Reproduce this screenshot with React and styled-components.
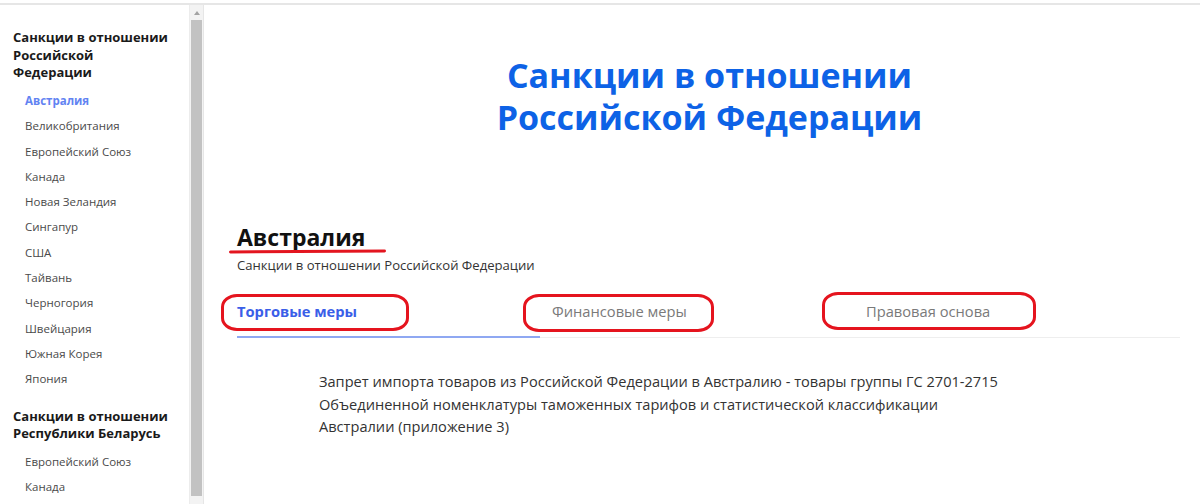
import React from "react";
import styled, { createGlobalStyle } from "styled-components";

const GlobalStyle = createGlobalStyle`
  html, body {
    margin: 0;
    padding: 0;
    background: #fff;
    font-family: "Open Sans", "Noto Sans", sans-serif;
    color: #222;
  }
`;

const Page = styled.div`
  width: 1200px;
  height: 504px;
  overflow: hidden;
  display: flex;
  flex-direction: column;
`;

const TopRule = styled.div`
  height: 2px;
  margin-top: 3px;
  background: #e6e6e6;
  flex-shrink: 0;
`;

const Layout = styled.div`
  flex: 1;
  display: flex;
  min-height: 0;
`;

const Sidebar = styled.nav`
  width: 189px;
  flex-shrink: 0;
  overflow: hidden;
  padding: 24px 0 0 13px;
  box-sizing: border-box;
`;

const SideHeading = styled.div`
  font-size: 13px;
  font-weight: 700;
  line-height: 17.5px;
  color: #1a1a1a;
  margin-top: ${({ $first }) => ($first ? "0" : "16px")};
  margin-bottom: 6.5px;
  width: 158px;
`;

const SideItem = styled.div`
  padding-left: 12px;
  font-size: 11.5px;
  line-height: 25.3px;
  white-space: nowrap;
  color: ${({ $active }) => ($active ? "#6283f2" : "#4a4a4a")};
  font-weight: ${({ $active }) => ($active ? 700 : 400)};
`;

const ScrollTrack = styled.div`
  width: 15px;
  flex-shrink: 0;
  background: #f3f3f3;
  border-left: 1px solid #ececec;
  border-right: 1px solid #e6e6e6;
  display: flex;
  flex-direction: column;
  align-items: center;
  padding-top: 6px;
  box-sizing: border-box;
`;

const ScrollArrow = styled.div`
  width: 0;
  height: 0;
  border-left: 3.5px solid transparent;
  border-right: 3.5px solid transparent;
  border-bottom: 4px solid #a3a3a3;
  margin-bottom: 5px;
`;

const ScrollThumb = styled.div`
  width: 11px;
  height: 476px;
  background: #c2c2c2;
`;

const Main = styled.main`
  flex: 1;
  padding: 49px 20px 0 33px;
  box-sizing: border-box;
`;

const PageTitle = styled.h1`
  margin: 0 0 84px 0;
  padding-left: 2px;
  text-align: center;
  font-size: 34px;
  line-height: 42px;
  font-weight: 700;
  color: #0d62e6;
`;

const CountryTitle = styled.h2`
  position: relative;
  display: inline-block;
  margin: 0;
  font-size: 23px;
  line-height: 30px;
  font-weight: 700;
  color: #111;
`;

const RedUnderline = styled.span`
  position: absolute;
  left: -8px;
  top: 28px;
  width: 157px;
  height: 3px;
  border-radius: 2px;
  background: #e3151f;
  transform: rotate(-0.3deg);
`;

const Subtitle = styled.div`
  margin-top: 5px;
  font-size: 13.1px;
  line-height: 16px;
  color: #333;
`;

const TabRow = styled.div`
  margin-top: 17px;
  display: flex;
  border-bottom: 1px solid #eeeeee;
`;

const Tab = styled.div`
  position: relative;
  width: ${({ $width }) => $width}px;
  padding: 11px 0 15px ${({ $pad }) => $pad}px;
  box-sizing: border-box;
  font-size: 14.7px;
  line-height: 20px;
  white-space: nowrap;
  color: ${({ $active }) => ($active ? "#3a5ee8" : "#7a7a7a")};
  font-weight: ${({ $active }) => ($active ? 700 : 400)};
  border-bottom: 2px solid ${({ $active }) => ($active ? "#8fa8f2" : "transparent")};
  margin-bottom: -1px;
`;

const Annotation = styled.span`
  position: absolute;
  left: ${({ $x }) => $x}px;
  top: ${({ $y }) => $y}px;
  width: ${({ $w }) => $w}px;
  height: ${({ $h }) => $h}px;
  border: 3.5px solid #e5141e;
  border-radius: 16px / 13px;
  box-sizing: border-box;
  pointer-events: none;
`;

const Content = styled.p`
  margin: 32px 0 0 82px;
  max-width: 690px;
  font-size: 14.6px;
  line-height: 22.5px;
  color: #333;
`;

const russia = [
  "Австралия",
  "Великобритания",
  "Европейский Союз",
  "Канада",
  "Новая Зеландия",
  "Сингапур",
  "США",
  "Тайвань",
  "Черногория",
  "Швейцария",
  "Южная Корея",
  "Япония",
];

const belarus = ["Европейский Союз", "Канада"];

const tabs = [
  { label: "Торговые меры", width: 303, pad: 0, active: true, mark: { x: -16, y: 4, w: 188, h: 37 } },
  { label: "Финансовые меры", width: 314, pad: 12, mark: { x: -17, y: 4, w: 191, h: 38 } },
  { label: "Правовая основа", width: 325, pad: 12, mark: { x: -32, y: 2, w: 214, h: 38 } },
];

export default function App() {
  return (
    <>
      <GlobalStyle />
      <Page>
        <TopRule />
        <Layout>
          <Sidebar>
            <SideHeading $first>Санкции в отношении Российской Федерации</SideHeading>
            {russia.map((name, i) => (
              <SideItem key={name} $active={i === 0}>
                {name}
              </SideItem>
            ))}
            <SideHeading>Санкции в отношении Республики Беларусь</SideHeading>
            {belarus.map((name) => (
              <SideItem key={name}>{name}</SideItem>
            ))}
          </Sidebar>
          <ScrollTrack>
            <ScrollArrow />
            <ScrollThumb />
          </ScrollTrack>
          <Main>
            <PageTitle>
              Санкции в отношении
              <br />
              Российской Федерации
            </PageTitle>
            <CountryTitle>
              Австралия
              <RedUnderline />
            </CountryTitle>
            <Subtitle>Санкции в отношении Российской Федерации</Subtitle>
            <TabRow>
              {tabs.map((t) => (
                <Tab key={t.label} $width={t.width} $pad={t.pad} $active={t.active}>
                  {t.label}
                  <Annotation $x={t.mark.x} $y={t.mark.y} $w={t.mark.w} $h={t.mark.h} />
                </Tab>
              ))}
            </TabRow>
            <Content>
              Запрет импорта товаров из Российской Федерации в Австралию - товары группы ГС 2701-2715
              Объединенной номенклатуры таможенных тарифов и статистической классификации
              Австралии (приложение 3)
            </Content>
          </Main>
        </Layout>
      </Page>
    </>
  );
}
